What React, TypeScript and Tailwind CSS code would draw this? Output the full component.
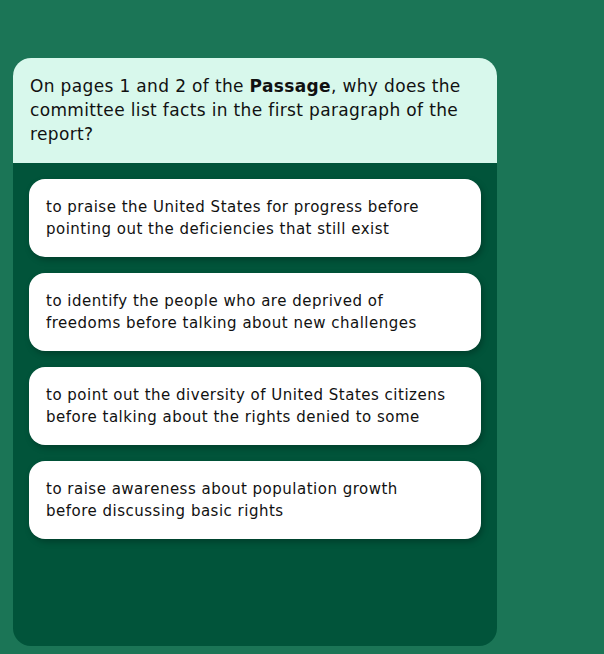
import React from 'react';

const options = [
  'to praise the United States for progress before pointing out the deficiencies that still exist',
  'to identify the people who are deprived of freedoms before talking about new challenges',
  'to point out the diversity of United States citizens before talking about the rights denied to some',
  'to raise awareness about population growth before discussing basic rights',
];

const App: React.FC = () => {
  return (
    <div
      className="min-h-screen w-full bg-[#1b7556] pt-[58px] pl-[13px]"
      style={{ fontFamily: '"DejaVu Sans", sans-serif' }}
    >
      <div className="w-[484px] h-[588px] rounded-[18px] overflow-hidden bg-[#01543a] flex flex-col">
        <p className="bg-[#d8f8ec] px-[17px] pt-[16px] pb-[17px] text-[17px] leading-[24px] tracking-[0.35px] text-[#111111]">
          On pages 1 and 2 of the <b className="font-bold">Passage</b>, why does the committee list facts in the first paragraph of the report?
        </p>
        <div className="flex flex-col gap-4 p-4">
          {options.map((opt) => (
            <div
              key={opt}
              className="bg-white rounded-[16px] pl-[17px] pr-[30px] py-[17px] text-[15px] leading-[22px] tracking-[0.5px] text-[#111111] shadow-[2px_3px_6px_rgba(0,0,0,0.25)]"
            >
              {opt}
            </div>
          ))}
        </div>
      </div>
    </div>
  );
};

export default App;
